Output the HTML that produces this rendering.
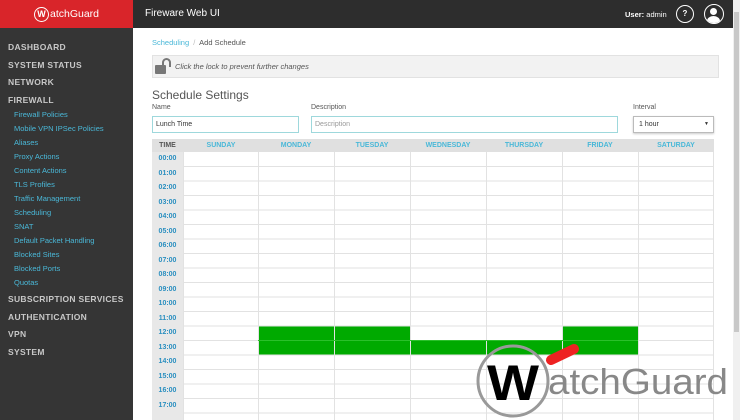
<!DOCTYPE html>
<html><head><style>
*{margin:0;padding:0;box-sizing:border-box}
body{width:740px;height:420px;overflow:hidden;font-family:"Liberation Sans",sans-serif;background:#fff;position:relative}
.abs{position:absolute}
#top{left:0;top:0;width:733px;height:28px;background:#2d2d2d}
#logo{left:0;top:0;width:133px;height:28px;background:#d9252a;color:#fff;font-size:10.5px;display:flex;align-items:center;justify-content:center}
#side{left:0;top:28px;width:133px;height:392px;background:#353535}
.m{position:absolute;left:8px;color:#c8c8c8;font-weight:bold;font-size:8.5px;letter-spacing:.3px}
.s{position:absolute;left:14px;color:#4ab8d8;font-size:7.5px}
.day{position:absolute;top:139px;height:13px;font-size:7px;font-weight:bold;color:#4ab8d8;text-align:center;line-height:13px}
.t{position:absolute;left:152px;width:31px;font-size:7px;color:#2a8fc0;text-align:center;font-weight:bold}
</style></head><body>
<div id="top" class="abs"></div>
<div id="logo" class="abs"><span style="display:inline-block;width:15px;height:15px;border:1.5px solid #fff;border-radius:50%;font-weight:bold;font-size:9px;text-align:center;line-height:12px;margin-right:1px">W</span>atchGuard</div>
<div class="abs" style="left:145px;top:8px;color:#fff;font-size:10px">Fireware Web UI</div>
<div class="abs" style="left:625px;top:10px;color:#fff;font-size:7.5px"><b>User:</b> admin</div>
<div class="abs" style="left:676px;top:5px;width:18px;height:18px;border:1.5px solid #fff;border-radius:50%;color:#fff;font-size:8px;text-align:center;line-height:15px;font-weight:bold">?</div>
<div class="abs" style="left:704px;top:4px;width:20px;height:20px;border:1.5px solid #fff;border-radius:50%;overflow:hidden"><div class="abs" style="left:5px;top:3px;width:7px;height:7px;background:#fff;border-radius:50%"></div><div class="abs" style="left:2px;top:11px;width:13px;height:10px;background:#fff;border-radius:50% 50% 0 0"></div></div>
<div class="abs" style="left:733px;top:0;width:7px;height:420px;background:#f0f0f0"></div>
<div class="abs" style="left:734px;top:12px;width:5px;height:320px;background:#c8c8c8"></div>
<div id="side" class="abs"></div>
<div class="m" style="top:42px">DASHBOARD</div>
<div class="m" style="top:60px">SYSTEM STATUS</div>
<div class="m" style="top:77px">NETWORK</div>
<div class="m" style="top:95px">FIREWALL</div>
<div class="s" style="top:110px">Firewall Policies</div>
<div class="s" style="top:124px">Mobile VPN IPSec Policies</div>
<div class="s" style="top:138px">Aliases</div>
<div class="s" style="top:152px">Proxy Actions</div>
<div class="s" style="top:166px">Content Actions</div>
<div class="s" style="top:180px">TLS Profiles</div>
<div class="s" style="top:194px">Traffic Management</div>
<div class="s" style="top:208px">Scheduling</div>
<div class="s" style="top:222px">SNAT</div>
<div class="s" style="top:236px">Default Packet Handling</div>
<div class="s" style="top:250px">Blocked Sites</div>
<div class="s" style="top:264px">Blocked Ports</div>
<div class="s" style="top:278px">Quotas</div>
<div class="m" style="top:294px">SUBSCRIPTION SERVICES</div>
<div class="m" style="top:312px">AUTHENTICATION</div>
<div class="m" style="top:329px">VPN</div>
<div class="m" style="top:347px">SYSTEM</div>
<div class="abs" style="left:152px;top:38px;font-size:7.5px;color:#4ab8d8">Scheduling <span style="color:#bbb">&nbsp;/&nbsp;</span> <span style="color:#555">Add Schedule</span></div>
<div class="abs" style="left:152px;top:55px;width:567px;height:23px;background:#f2f2f2;border:1px solid #e2e2e2"></div>
<div class="abs" style="left:155px;top:65px;width:11px;height:9px;background:#777;border-radius:1px"></div>
<div class="abs" style="left:162px;top:58px;width:9px;height:9px;border:2px solid #777;border-bottom:none;border-radius:5px 5px 0 0"></div>
<div class="abs" style="left:175px;top:62px;font-size:7.5px;font-style:italic;color:#555">Click the lock to prevent further changes</div>
<div class="abs" style="left:152px;top:88px;font-size:12px;color:#555">Schedule Settings</div>
<div class="abs" style="left:152px;top:104px;font-size:7px;color:#555">Name</div>
<div class="abs" style="left:311px;top:104px;font-size:7px;color:#555">Description</div>
<div class="abs" style="left:633px;top:104px;font-size:7px;color:#555">Interval</div>
<div class="abs" style="left:152px;top:116px;width:147px;height:17px;border:1px solid #9ed8dc;font-size:7px;color:#333;padding:4px 3px">Lunch Time</div>
<div class="abs" style="left:311px;top:116px;width:307px;height:17px;border:1px solid #9ed8dc;font-size:7px;color:#999;padding:4px 3px">Description</div>
<div class="abs" style="left:633px;top:116px;width:81px;height:17px;border:1px solid #bbb;font-size:7px;color:#333;padding:4px 5px;box-shadow:0 1px 2px #ccc">1 hour<span style="position:absolute;right:4px;font-size:5px">▼</span></div>
<svg class="abs" style="left:152px;top:139px" width="562" height="281">
<rect x="0" y="0" width="562" height="13" fill="#e0e0e0"/>
<rect x="0" y="13" width="31" height="268" fill="#e8e8e8"/>
<g fill="#00aa00">
<rect x="106" y="187" width="152" height="29"/>
<rect x="258" y="202" width="152" height="14"/>
<rect x="410" y="187" width="76" height="29"/>
</g>
<g stroke="#e2e2e2" stroke-width="1">
<path d="M31.5 13V281M106.5 13V281M182.5 13V281M258.5 13V281M334.5 13V281M410.5 13V281M486.5 13V281M561.5 13V281"/>
<path d="M31 27.5H562M31 42H562M31 56.5H562M31 71H562M31 85.5H562M31 100H562M31 114.5H562M31 129H562M31 143.5H562M31 158H562M31 172.5H562M31 187H562M31 201.5H562M31 216H562M31 230.5H562M31 245H562M31 259.5H562M31 274H562"/>
</g>
<g stroke="#2ac02a" stroke-width="1"><path d="M106 201.5H486"/></g>
</svg>
<div class="day" style="left:152px;width:31px;color:#555">TIME</div>
<div class="day" style="left:183px;width:76px">SUNDAY</div>
<div class="day" style="left:258px;width:76px">MONDAY</div>
<div class="day" style="left:334px;width:76px">TUESDAY</div>
<div class="day" style="left:410px;width:76px">WEDNESDAY</div>
<div class="day" style="left:486px;width:76px">THURSDAY</div>
<div class="day" style="left:562px;width:76px">FRIDAY</div>
<div class="day" style="left:638px;width:76px">SATURDAY</div>
<div class="t" style="top:155px">00:00</div><div class="t" style="top:170px">01:00</div><div class="t" style="top:184px">02:00</div><div class="t" style="top:199px">03:00</div><div class="t" style="top:213px">04:00</div><div class="t" style="top:228px">05:00</div><div class="t" style="top:242px">06:00</div><div class="t" style="top:257px">07:00</div><div class="t" style="top:271px">08:00</div><div class="t" style="top:286px">09:00</div><div class="t" style="top:300px">10:00</div><div class="t" style="top:315px">11:00</div><div class="t" style="top:329px">12:00</div><div class="t" style="top:344px">13:00</div><div class="t" style="top:358px">14:00</div><div class="t" style="top:373px">15:00</div><div class="t" style="top:387px">16:00</div><div class="t" style="top:402px">17:00</div>
<svg class="abs" style="left:475px;top:340px" width="265" height="80">
<circle cx="38" cy="41" r="35" fill="none" stroke="#999" stroke-width="3"/>
<text x="12" y="60" font-family="Liberation Sans" font-weight="bold" font-size="50" fill="#000" textLength="52" lengthAdjust="spacingAndGlyphs">W</text>
<text x="73" y="54" font-family="Liberation Sans" font-size="36" fill="#888" textLength="180" lengthAdjust="spacingAndGlyphs">atchGuard</text>
<line x1="76" y1="20" x2="99" y2="9" stroke="#ee2222" stroke-width="10" stroke-linecap="round"/>
</svg>
</body></html>
